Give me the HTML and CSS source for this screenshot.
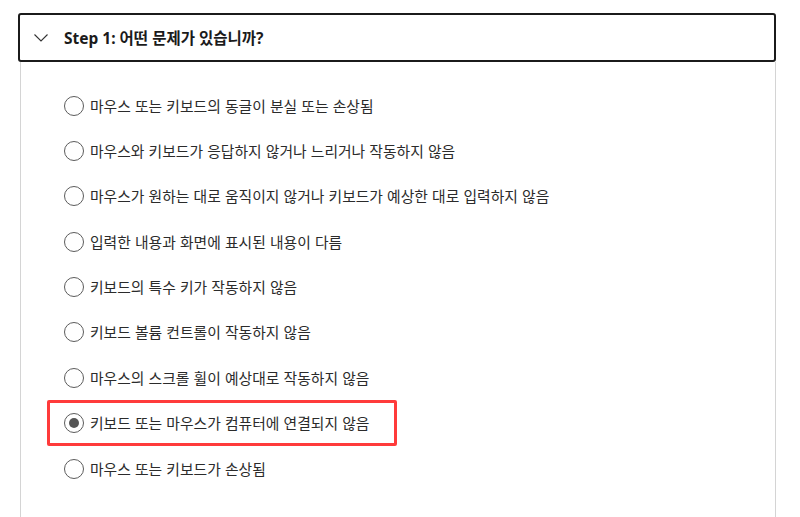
FILE: index.html
```html
<!DOCTYPE html>
<html lang="ko">
<head>
<meta charset="utf-8">
<link rel="stylesheet" href="styles.css">
</head>
<body>
<div class="accordion">
  <div class="acc-header">
    <svg class="chevron" width="14" height="8" viewBox="0 0 14 8"><path d="M0.5 0.5 L7 7 L13.5 0.5" fill="none" stroke="#333" stroke-width="1.1"/></svg>
    <span class="title">Step 1: 어떤 문제가 있습니까?</span>
  </div>
  <div class="acc-panel">
    <ul class="options">
      <li class="option"><span class="radio"></span><span class="label">마우스 또는 키보드의 동글이 분실 또는 손상됨</span></li>
      <li class="option"><span class="radio"></span><span class="label">마우스와 키보드가 응답하지 않거나 느리거나 작동하지 않음</span></li>
      <li class="option"><span class="radio"></span><span class="label">마우스가 원하는 대로 움직이지 않거나 키보드가 예상한 대로 입력하지 않음</span></li>
      <li class="option"><span class="radio"></span><span class="label">입력한 내용과 화면에 표시된 내용이 다름</span></li>
      <li class="option"><span class="radio"></span><span class="label">키보드의 특수 키가 작동하지 않음</span></li>
      <li class="option"><span class="radio"></span><span class="label">키보드 볼륨 컨트롤이 작동하지 않음</span></li>
      <li class="option"><span class="radio"></span><span class="label">마우스의 스크롤 휠이 예상대로 작동하지 않음</span></li>
      <li class="option selected highlight"><span class="radio"></span><span class="label">키보드 또는 마우스가 컴퓨터에 연결되지 않음</span></li>
      <li class="option"><span class="radio"></span><span class="label">마우스 또는 키보드가 손상됨</span></li>
    </ul>
  </div>
</div>
</body>
</html>
```

FILE: styles.css
```css
html, body {
  margin: 0;
  padding: 0;
  background: #ffffff;
}
body {
  font-family: "Noto Sans", "Noto Sans CJK KR", sans-serif;
  color: #262626;
  overflow: hidden;
  height: 517px;
}
.accordion {
  margin: 13px 0 0 18px;
  width: 758px;
}
.acc-header {
  box-sizing: border-box;
  height: 49px;
  border: 2px solid #1b1b1b;
  border-radius: 3px;
  display: flex;
  align-items: center;
  padding-left: 14px;
}
.chevron {
  display: block;
  margin-top: 1px;
}
.title {
  margin-left: 16px;
  font-size: 15.5px;
  font-weight: 700;
  color: #1b1b1b;
  font-family: "Noto Sans", "Noto Sans CJK KR", sans-serif;
  line-height: 20px;
}
.acc-panel {
  box-sizing: border-box;
  margin-left: 2px;
  width: 756px;
  height: 470px;
  border-left: 1px solid #d4d4d4;
  border-right: 1px solid #d4d4d4;
  padding: 33.5px 0 0 43px;
}
.options {
  list-style: none;
  margin: 0;
  padding: 0;
  display: flex;
  flex-direction: column;
  gap: 25.4px;
}
.option {
  display: flex;
  align-items: center;
  height: 20px;
  font-size: 14.8px;
  font-family: "Noto Sans CJK KR", sans-serif;
  color: #2b2b2b;
}
.radio {
  box-sizing: border-box;
  width: 20px;
  height: 20px;
  border: 1.5px solid #5c5c5c;
  border-radius: 50%;
  flex: none;
  display: flex;
  align-items: center;
  justify-content: center;
}
.selected .radio::after {
  content: "";
  width: 10px;
  height: 10px;
  border-radius: 50%;
  background: #555555;
}
.label {
  margin-left: 6px;
  line-height: 20px;
  white-space: nowrap;
}
.highlight {
  position: relative;
}
.highlight::before {
  content: "";
  position: absolute;
  left: -17px;
  top: -13px;
  width: 350px;
  height: 46px;
  box-sizing: border-box;
  border: 3px solid #ff3b3b;
  border-radius: 2px;
}
```
